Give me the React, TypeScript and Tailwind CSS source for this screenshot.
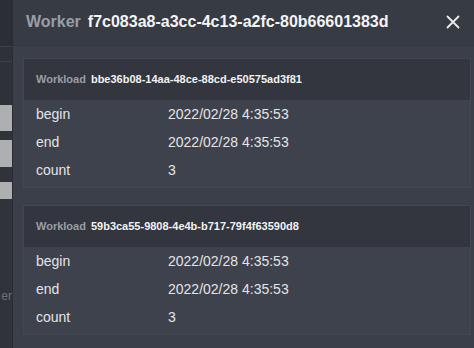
import React from "react";

const rows = [
  ["begin", "2022/02/28 4:35:53"],
  ["end", "2022/02/28 4:35:53"],
  ["count", "3"],
];

function Card({ id, className = "" }: { id: string; className?: string }) {
  return (
    <div className={`border border-[#42464f] bg-[#3e424c] pb-[3px] ${className}`}>
      <div className="flex h-[41px] items-center gap-[5px] bg-[#33363e] px-[12px] text-[11px] font-bold">
        <span className="text-[#9a9ea6]">Workload</span>
        <span className="text-[#f2f2f2]">{id}</span>
      </div>
      {rows.map(([k, v]) => (
        <div key={k} className="flex h-[28px] items-center px-[12px] pt-[1px] text-[14px] text-[#e4e4e6]">
          <span className="w-[132px]">{k}</span>
          <span>{v}</span>
        </div>
      ))}
    </div>
  );
}

export default function App() {
  return (
    <div
      className="flex h-[348px] w-[474px] overflow-hidden bg-[#30333a]"
      style={{ fontFamily: '"Liberation Sans", Arial, sans-serif' }}
    >
      <div className="flex w-[12px] flex-col bg-[#30333a]">
        <div className="h-[46px] bg-[#2b2e34]" />
        <div className="h-[1px] bg-[#3d4047]" />
        <div className="h-[14px] bg-[#2e3137]" />
        <div className="h-[1px] bg-[#3d4047]" />
        <div className="h-[43px] bg-[#2e3137]" />
        <div className="h-[26px] bg-[#aeafb2]" />
        <div className="h-[9px]" />
        <div className="h-[27px] bg-[#aeafb2]" />
        <div className="h-[15px]" />
        <div className="h-[17px] bg-[#aeafb2]" />
        <div className="relative flex-1">
          <span className="absolute right-0 top-[91px] text-[12px] leading-none text-[#6d7078]">er</span>
        </div>
      </div>
      <div className="flex flex-1 flex-col border-l border-[#2a2d33] bg-[#3b3f49]">
        <div className="flex h-[46px] shrink-0 items-center border-b border-[#32363e] bg-[#373b44] pb-[2px] pl-[13px] pr-[14px]">
          <span className="text-[16px] font-bold text-[#9a9ea6]">Worker</span>
          <span className="ml-[7px] text-[16px] font-bold text-[#f4f4f4]">
            f7c083a8-a3cc-4c13-a2fc-80b66601383d
          </span>
          <svg className="ml-auto" width="14" height="14" viewBox="0 0 14 14" fill="none">
            <path d="M1.5 1.5 L12.5 12.5 M12.5 1.5 L1.5 12.5" stroke="#ececec" strokeWidth="1.8" strokeLinecap="round" />
          </svg>
        </div>
        <div className="flex flex-col pl-[10px] pr-[3px] pt-[12px]">
          <Card id="bbe36b08-14aa-48ce-88cd-e50575ad3f81" />
          <Card id="59b3ca55-9808-4e4b-b717-79f4f63590d8" className="mt-[17px]" />
        </div>
      </div>
    </div>
  );
}
